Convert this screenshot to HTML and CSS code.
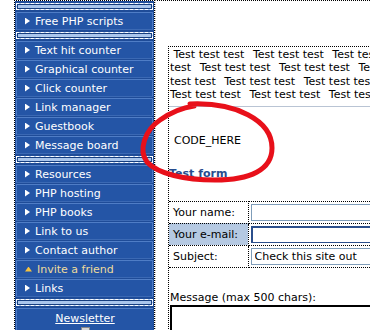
FILE: index.html
```html
<!DOCTYPE html>
<html lang="en">
<head>
  <meta charset="UTF-8">
  <title>Tell a friend</title>
  <link rel="stylesheet" href="styles.css">
</head>
<body>

<div class="sidebar">
  <div class="sep"></div>
  <a class="item" href="#">Free PHP scripts</a>
  <div class="sep"></div>
  <a class="item" href="#">Text hit counter</a>
  <a class="item" href="#">Graphical counter</a>
  <a class="item" href="#">Click counter</a>
  <a class="item" href="#">Link manager</a>
  <a class="item" href="#">Guestbook</a>
  <a class="item" href="#">Message board</a>
  <div class="sep"></div>
  <a class="item" href="#">Resources</a>
  <a class="item" href="#">PHP hosting</a>
  <a class="item" href="#">PHP books</a>
  <a class="item" href="#">Link to us</a>
  <a class="item" href="#">Contact author</a>
  <a class="item item-invite" href="#">Invite a friend</a>
  <a class="item" href="#">Links</a>
  <div class="sep"></div>
  <div class="newsletter">
    <a href="#">Newsletter</a>
    <span class="mail-icon"></span>
  </div>
</div>

<div class="main">
  <div class="content">
    <!-- sample text, repeated -->
    <div class="test-box">
      <div class="line">&nbsp;Test test test <i class="gap"></i>Test test test <i class="gap"></i>Test test test</div>
      <div class="line">test <i class="gap"></i>Test test test <i class="gap"></i>Test test test <i class="gap"></i>Test test test</div>
      <div class="line">test test <i class="gap"></i>Test test test <i class="gap"></i>Test test test</div>
      <div class="line">Test test test <i class="gap"></i>Test test test <i class="gap"></i>Test test test</div>
    </div>
    <div class="rule"></div>

    <p class="code">CODE_HERE</p>

    <h3 class="form-title">Test form</h3>

    <!-- Tell a friend form -->
    <form>
      <table class="form-table">
        <tr>
          <td class="label">Your name:</td>
          <td><input type="text" class="field"></td>
        </tr>
        <tr>
          <td class="label label-active">Your e-mail:</td>
          <td><input type="text" class="field field-active"></td>
        </tr>
        <tr>
          <td class="label">Subject:</td>
          <td><input type="text" class="field" value="Check this site out"></td>
        </tr>
      </table>

      <p class="msg-label">Message (max 500 chars):</p>
      <textarea class="message"></textarea>
    </form>
  </div>
</div>

<svg class="scribble" width="370" height="330" viewBox="0 0 370 330">
  <path d="M190 104 C235 102 272 120 272 148 C272 170 250 180 215 180 C185 180 158 174 147 162 C138 150 145 130 160 120 C170 113 180 108 194 106"
        fill="none" stroke="#e8101a" stroke-width="5" stroke-linecap="round"/>
</svg>

</body>
</html>
```

FILE: styles.css
```css
body {
  margin: 0;
  padding: 0;
  display: flex;
  align-items: flex-start;
  width: 370px;
  height: 330px;
  overflow: hidden;
  font-family: Verdana, "DejaVu Sans", sans-serif;
  font-size: 11px;
  background: #fff;
  color: #000;
}

.sidebar {
  box-sizing: border-box;
  flex: none;
  width: 141px;
  min-height: 340px;
  margin-left: 14px;
  padding: 1px 1px 0;
  background: #1f4c98;
  background-clip: padding-box;
  border: 1px dotted #000;
  display: flex;
  flex-direction: column;
}

.sep {
  height: 5px;
  margin: 1px 0 2px;
  background: #aac6ec;
  border: 1px dashed #fff;
  box-shadow: inset 0 0 0 1px #173f80;
}

.item {
  box-sizing: border-box;
  display: flex;
  align-items: center;
  gap: 5px;
  height: 18px;
  margin-bottom: 1px;
  padding-left: 8px;
  background: #2455a6;
  border: 1px solid #4f7dc6;
  border-bottom-color: #3b69b4;
  color: #fff;
  text-decoration: none;
  white-space: nowrap;
}

.item::before {
  content: "";
  width: 5px;
  height: 7px;
  background: #fff;
  clip-path: polygon(0 0, 100% 50%, 0 100%);
}

.item-invite {
  color: #eedc9c;
}

.item-invite::before {
  width: 7px;
  height: 5px;
  background: #f6c23e;
  clip-path: polygon(50% 0, 100% 100%, 0 100%);
}

.newsletter {
  display: flex;
  flex-direction: column;
  align-items: center;
  padding-top: 3px;
  background: #2455a6;
  border-top: 1px solid #4f7dc6;
  border-left: 1px solid #4f7dc6;
  min-height: 30px;
}

.newsletter a {
  color: #fff;
  line-height: 13px;
}

.mail-icon {
  width: 7px;
  height: 7px;
  margin-top: 2px;
  background: #d8d8d8;
  border: 1px solid #888;
}

.main {
  flex: 1;
  min-width: 0;
  height: 330px;
  padding-left: 12px;
  border-top: 1px dotted #000;
  border-left: 1px dotted #bbb;
  overflow: hidden;
}

.content {
  width: 420px;
  min-height: 300px;
  margin-top: 45px;
  border-top: 1px dotted #000;
  border-left: 1px dotted #000;
}

.test-box {
  padding: 1px 0 0 1px;
  line-height: 13.4px;
}

.line {
  white-space: nowrap;
}

.gap {
  display: inline-block;
  width: 5px;
}

.rule {
  height: 1px;
  margin-top: 4px;
  background: #b9c4d4;
}

.code {
  margin: 27px 0 0 5px;
  line-height: 13px;
}

.form-title {
  margin: 20px 0 0;
  font-size: 11px;
  line-height: 13px;
  color: #264c8e;
}

.form-table {
  margin-top: 21px;
  border-collapse: collapse;
}

.form-table td {
  height: 21px;
  padding: 0 2px;
  border: 1px dotted #000;
  white-space: nowrap;
}

.form-table td.label {
  box-sizing: border-box;
  width: 79px;
  padding-left: 4px;
  border-left: none;
}

.label-active {
  background: #b5c9e2;
}

.field {
  box-sizing: border-box;
  width: 250px;
  height: 17px;
  margin: 0;
  padding: 0 3px;
  font-family: inherit;
  font-size: 11px;
  border: 1px solid #7f9db9;
  vertical-align: middle;
}

.field-active {
  border-color: #2b4f8c;
  box-shadow: inset 1px 1px 0 #2b4f8c;
}

.msg-label {
  margin: 23px 0 0 1px;
  line-height: 13px;
}

.message {
  display: block;
  box-sizing: border-box;
  width: 300px;
  height: 60px;
  margin: 1px 0 0 1px;
  border: 2px inset #777;
  border-top-color: #222;
  border-left-color: #222;
}

.scribble {
  position: absolute;
  left: 0;
  top: 0;
  pointer-events: none;
}
```
